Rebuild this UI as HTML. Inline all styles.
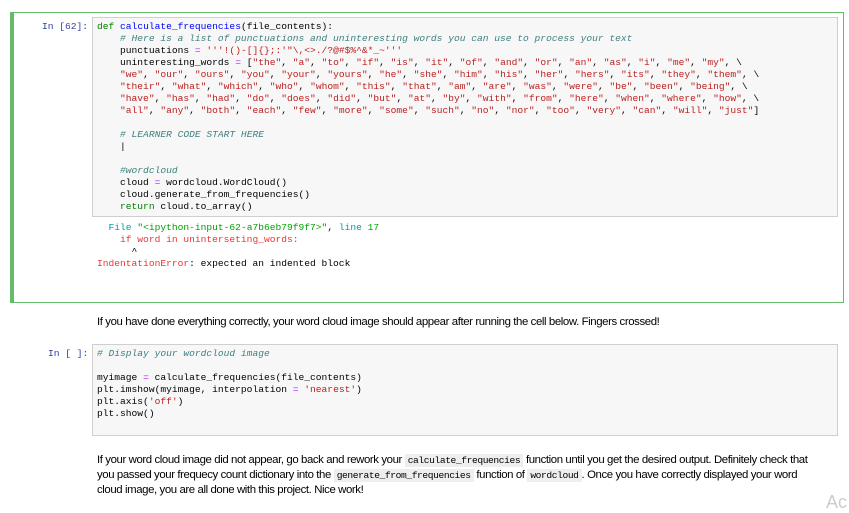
<!DOCTYPE html>
<html><head><meta charset="utf-8"><style>
body{margin:0;width:849px;height:502px;background:#fff;position:relative;overflow:hidden;font-family:"Liberation Sans",Arial,sans-serif}
.abs{position:absolute}
.m{font-family:"Liberation Mono",monospace;font-size:9.6px;white-space:pre;line-height:12px;color:#000}
.k{color:#008000}.f{color:#0000ff}.s{color:#ba2121}.c{color:#408080;font-style:italic}.o{color:#aa22ff}
.p{color:#303f9f}
.t{font-size:11.4px;color:#000;white-space:nowrap;letter-spacing:-0.4px}
code{font-family:"Liberation Mono",monospace;font-size:9.6px;background:#eee;padding:1px 3px}
</style></head><body>
<div class="abs" style="left:10px;top:12px;width:834px;height:291px;border:1px solid #66bb6a;border-left:4px solid #66bb6a;box-sizing:border-box"></div>
<div class="abs" style="left:92px;top:17px;width:746px;height:200px;background:#f7f7f7;border:1px solid #cfcfcf;box-sizing:border-box"></div>
<div class="abs m p" style="left:42px;top:21px">In [62]:</div>
<div class="abs m" style="left:97px;top:21px"><span class="k">def</span> <span class="f">calculate_frequencies</span>(file_contents):
    <span class="c"># Here is a list of punctuations and uninteresting words you can use to process your text</span>
    punctuations <span class="o">=</span> <span class="s">'''!()-[]{};:'"\,&lt;&gt;./?@#$%^&amp;*_~'''</span>
    uninteresting_words <span class="o">=</span> [<span class="s">"the"</span>, <span class="s">"a"</span>, <span class="s">"to"</span>, <span class="s">"if"</span>, <span class="s">"is"</span>, <span class="s">"it"</span>, <span class="s">"of"</span>, <span class="s">"and"</span>, <span class="s">"or"</span>, <span class="s">"an"</span>, <span class="s">"as"</span>, <span class="s">"i"</span>, <span class="s">"me"</span>, <span class="s">"my"</span>, \
    <span class="s">"we"</span>, <span class="s">"our"</span>, <span class="s">"ours"</span>, <span class="s">"you"</span>, <span class="s">"your"</span>, <span class="s">"yours"</span>, <span class="s">"he"</span>, <span class="s">"she"</span>, <span class="s">"him"</span>, <span class="s">"his"</span>, <span class="s">"her"</span>, <span class="s">"hers"</span>, <span class="s">"its"</span>, <span class="s">"they"</span>, <span class="s">"them"</span>, \
    <span class="s">"their"</span>, <span class="s">"what"</span>, <span class="s">"which"</span>, <span class="s">"who"</span>, <span class="s">"whom"</span>, <span class="s">"this"</span>, <span class="s">"that"</span>, <span class="s">"am"</span>, <span class="s">"are"</span>, <span class="s">"was"</span>, <span class="s">"were"</span>, <span class="s">"be"</span>, <span class="s">"been"</span>, <span class="s">"being"</span>, \
    <span class="s">"have"</span>, <span class="s">"has"</span>, <span class="s">"had"</span>, <span class="s">"do"</span>, <span class="s">"does"</span>, <span class="s">"did"</span>, <span class="s">"but"</span>, <span class="s">"at"</span>, <span class="s">"by"</span>, <span class="s">"with"</span>, <span class="s">"from"</span>, <span class="s">"here"</span>, <span class="s">"when"</span>, <span class="s">"where"</span>, <span class="s">"how"</span>, \
    <span class="s">"all"</span>, <span class="s">"any"</span>, <span class="s">"both"</span>, <span class="s">"each"</span>, <span class="s">"few"</span>, <span class="s">"more"</span>, <span class="s">"some"</span>, <span class="s">"such"</span>, <span class="s">"no"</span>, <span class="s">"nor"</span>, <span class="s">"too"</span>, <span class="s">"very"</span>, <span class="s">"can"</span>, <span class="s">"will"</span>, <span class="s">"just"</span>]

    <span class="c"># LEARNER CODE START HERE</span>
    |

    <span class="c">#wordcloud</span>
    cloud <span class="o">=</span> wordcloud.WordCloud()
    cloud.generate_from_frequencies()
    <span class="k">return</span> cloud.to_array()</div>
<div class="abs m" style="left:97px;top:222px">  <span style="color:#00a0a0">File</span> <span style="color:#00a000">"&lt;ipython-input-62-a7b6eb79f9f7&gt;"</span>, <span style="color:#00a0a0">line</span> <span style="color:#00a000">17</span>
<span style="color:#e33">    if word in uninterseting_words:</span>
      ^
<span style="color:#e33">IndentationError</span>: expected an indented block</div>
<div class="abs t" style="left:97px;top:316px">If you have done everything correctly, your word cloud image should appear after running the cell below. Fingers crossed!</div>
<div class="abs" style="left:92px;top:344px;width:746px;height:92px;background:#f7f7f7;border:1px solid #cfcfcf;box-sizing:border-box"></div>
<div class="abs m p" style="left:48px;top:348px">In [ ]:</div>
<div class="abs m" style="left:97px;top:348px"><span class="c"># Display your wordcloud image</span>

myimage <span class="o">=</span> calculate_frequencies(file_contents)
plt.imshow(myimage, interpolation <span class="o">=</span> <span class="s">'nearest'</span>)
plt.axis(<span class="s">'off'</span>)
plt.show()</div>
<div class="abs t" style="left:97px;top:453px;line-height:15px">If your word cloud image did not appear, go back and rework your <code>calculate_frequencies</code> function until you get the desired output. Definitely check that<br>you passed your frequecy count dictionary into the <code>generate_from_frequencies</code> function of <code>wordcloud</code>. Once you have correctly displayed your word<br>cloud image, you are all done with this project. Nice work!</div>
<div class="abs" style="left:826px;top:492px;font-size:18px;color:#ccc">Ac</div>
</body></html>
